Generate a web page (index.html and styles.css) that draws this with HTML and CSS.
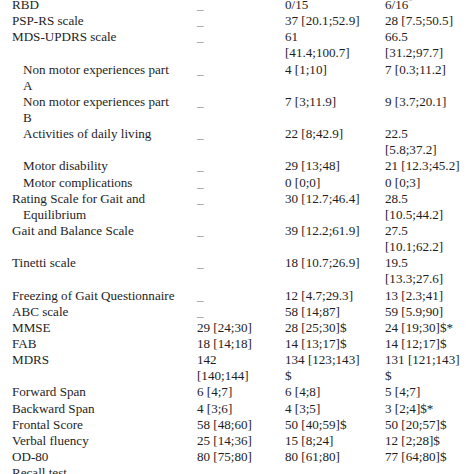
FILE: index.html
```html
<!DOCTYPE html>
<html>
<head>
<meta charset="utf-8">
<link rel="stylesheet" href="styles.css">
</head>
<body>
<table class="data">
  <colgroup>
    <col class="c-label"><col class="c-a"><col class="c-b"><col class="c-c">
  </colgroup>
  <tbody>
    <tr><td class="label">RBD</td><td class="dash">_</td><td>0/15</td><td>6/16<sup class="mark">*</sup></td></tr>
    <tr><td class="label">PSP-RS scale</td><td class="dash">_</td><td>37 [20.1;52.9]</td><td>28 [7.5;50.5]</td></tr>
    <tr><td class="label">MDS-UPDRS scale</td><td class="dash">_</td><td>61<br>[41.4;100.7]</td><td>66.5<br>[31.2;97.7]</td></tr>
    <tr><td class="label sub">Non motor experiences part<br>A</td><td class="dash">_</td><td>4 [1;10]</td><td>7 [0.3;11.2]</td></tr>
    <tr><td class="label sub">Non motor experiences part<br>B</td><td class="dash">_</td><td>7 [3;11.9]</td><td>9 [3.7;20.1]</td></tr>
    <tr><td class="label sub">Activities of daily living</td><td class="dash">_</td><td>22 [8;42.9]</td><td>22.5<br>[5.8;37.2]</td></tr>
    <tr><td class="label sub">Motor disability</td><td class="dash">_</td><td>29 [13;48]</td><td>21 [12.3;45.2]</td></tr>
    <tr><td class="label sub">Motor complications</td><td class="dash">_</td><td>0 [0;0]</td><td>0 [0;3]</td></tr>
    <tr><td class="label">Rating Scale for Gait and<br>Equilibrium</td><td class="dash">_</td><td>30 [12.7;46.4]</td><td>28.5<br>[10.5;44.2]</td></tr>
    <tr><td class="label">Gait and Balance Scale</td><td class="dash">_</td><td>39 [12.2;61.9]</td><td>27.5<br>[10.1;62.2]</td></tr>
    <tr><td class="label">Tinetti scale</td><td class="dash">_</td><td>18 [10.7;26.9]</td><td>19.5<br>[13.3;27.6]</td></tr>
    <tr><td class="label">Freezing of Gait Questionnaire</td><td class="dash">_</td><td>12 [4.7;29.3]</td><td>13 [2.3;41]</td></tr>
    <tr><td class="label">ABC scale</td><td class="dash">_</td><td>58 [14;87]</td><td>59 [5.9;90]</td></tr>
    <tr><td class="label">MMSE</td><td>29 [24;30]</td><td>28 [25;30]$</td><td>24 [19;30]$*</td></tr>
    <tr><td class="label">FAB</td><td>18 [14;18]</td><td>14 [13;17]$</td><td>14 [12;17]$</td></tr>
    <tr><td class="label">MDRS</td><td>142<br>[140;144]</td><td>134 [123;143]<br>$</td><td>131 [121;143]<br>$</td></tr>
    <tr><td class="label">Forward Span</td><td>6 [4;7]</td><td>6 [4;8]</td><td>5 [4;7]</td></tr>
    <tr><td class="label">Backward Span</td><td>4 [3;6]</td><td>4 [3;5]</td><td>3 [2;4]$*</td></tr>
    <tr><td class="label">Frontal Score</td><td>58 [48;60]</td><td>50 [40;59]$</td><td>50 [20;57]$</td></tr>
    <tr><td class="label">Verbal fluency</td><td>25 [14;36]</td><td>15 [8;24]</td><td>12 [2;28]$</td></tr>
    <tr><td class="label">OD-80</td><td>80 [75;80]</td><td>80 [61;80]</td><td>77 [64;80]$</td></tr>
    <tr><td class="label">Recall test</td><td></td><td></td><td></td></tr>
  </tbody>
</table>
</body>
</html>
```

FILE: styles.css
```css
html, body {
  margin: 0;
  padding: 0;
  background: #ffffff;
  overflow: hidden;
}

.data {
  margin: -3px 0 0 12px;
  border-collapse: collapse;
  table-layout: fixed;
  width: 480px;
  font-family: "Liberation Serif", "Times New Roman", serif;
  font-size: 13.1px;
  line-height: 16.14px;
  color: #1e1e1e;
}

.c-label { width: 185px; }
.c-a { width: 88px; }
.c-b { width: 100px; }
.c-c { width: 107px; }

.data td {
  padding: 0;
  vertical-align: top;
  white-space: nowrap;
  text-align: left;
}

.data td.label {
  padding-left: 11px;
  text-indent: -11px;
}

.data td.label.sub {
  text-indent: 0;
}

.data td.dash {
  color: #8a8a8a;
}

.mark {
  font-size: 8px;
  line-height: 0;
  vertical-align: 5px;
  color: #777;
}
```
